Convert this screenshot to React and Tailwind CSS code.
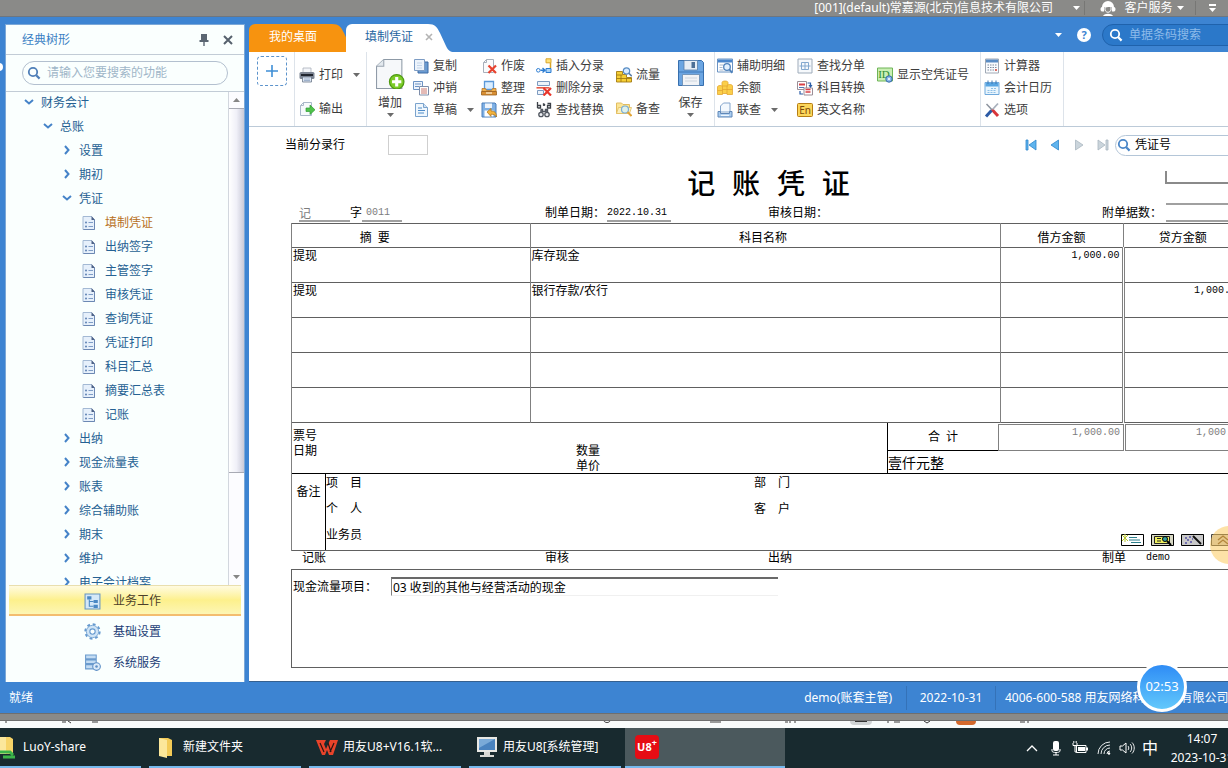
const Svg = ({ size = 16, box = 16, className = '', children }) => (
  <svg width={size} height={size} viewBox={`0 0 ${box} ${box}`} fill="none" className={`shrink-0 ${className}`} aria-hidden="true">
    {children}
  </svg>
)

const Caret = ({ className = 'text-[#6b6b6b]' }) => (
  <svg width="7" height="4" viewBox="0 0 7 4" className={`shrink-0 ${className}`} aria-hidden="true">
    <path d="M0 0h7L3.500 4z" fill="currentColor" />
  </svg>
)

const SearchIcon = ({ className, size = 14 }) => (
  <Svg size={size} box={14} className={className}>
    <circle cx="6" cy="6" r="4.2" stroke="currentColor" strokeWidth="1.8" />
    <path d="M9.2 9.2l3.4 3.4" stroke="currentColor" strokeWidth="2.2" />
  </Svg>
)

const DocIcon = () => (
  <Svg>
    <path d="M2 1.500h8.500l3 3v10H2z" fill="#e6f0fb" stroke="#a3b9d4" />
    <path d="M10.500 1v4h3.500z" fill="#4d6288" />
    <path d="M13.500 5v9.500H2.500" stroke="#6c88b3" />
    <circle cx="5" cy="7.500" r="1" fill="#5f82b3" />
    <circle cx="5" cy="11.500" r="1" fill="#5f82b3" />
    <path d="M7.500 7.500H12M7.500 11.500H12" stroke="#7f9dc6" />
  </Svg>
)

const icons = {
  print: (
    <Svg>
      <path d="M4 1h8v5H4z" fill="#f4f6fa" stroke="#a9b0ba" strokeWidth=".8" />
      <rect x="0.500" y="5" width="15" height="7" rx="1.500" fill="#7d8593" />
      <path d="M2 7h12v2H2z" fill="#20252e" />
      <path d="M3.500 10h9v5h-9z" fill="#dfe8f5" stroke="#6b7788" strokeWidth=".8" />
      <path d="M5 12h6M5 13.500h6" stroke="#8ea3c2" strokeWidth=".8" />
    </Svg>
  ),
  export: (
    <Svg>
      <path d="M4.500 1.500h8v13h-11v-10z" fill="#f7fafc" stroke="#a9b8c9" />
      <path d="M1.500 4.500h3v-3" stroke="#a9b8c9" />
      <path d="M7 7h4V4l5 4.800-5 4.700v-3H7z" fill="#4fc24a" stroke="#2f9c35" strokeWidth=".7" />
    </Svg>
  ),
  add: (
    <Svg size={31} box={30}>
      <path d="M8.500 1.500H26v28H1.500V8z" fill="#f6f8fa" stroke="#8d99a6" />
      <path d="M1.500 8h7V1.500" stroke="#9aa5b1" fill="#e3e9ee" />
      <circle cx="21" cy="23" r="7" fill="#7ccc28" stroke="#4f9a12" strokeWidth="1.200" />
      <path d="M21 18.500v9M16.500 23h9" stroke="#fff" strokeWidth="3" />
    </Svg>
  ),
  copy: (
    <Svg>
      <path d="M5 4h10v11H5z" fill="#6b9bd1" stroke="#3c6ba5" />
      <path d="M1.500 1.500h10v11h-10z" fill="#edf4fc" stroke="#7d9cc4" />
      <path d="M4 5h5M4 7.500h5M4 10h5" stroke="#c3d5ea" />
    </Svg>
  ),
  offset: (
    <Svg>
      <path d="M.5 1.500h9v8h-9z" fill="#eef4fc" stroke="#6d93c4" />
      <path d="M2 4h6M2 6.500h4" stroke="#6d93c4" />
      <path d="M6.500 6.500h9v8.500h-9z" fill="#fff" stroke="#7e8eaa" />
      <path d="M8 9h6M8 11h6M8 13h6" stroke="#c9776f" />
    </Svg>
  ),
  draft: (
    <Svg>
      <path d="M2.500 1.500h8l4 4v9h-12z" fill="#f0f7fd" stroke="#7ba3cd" />
      <path d="M10.500 1.500v4h4" fill="#cfe2f5" stroke="#7ba3cd" />
      <path d="M5 6h4M5 8.500h7M5 11h6" stroke="#4f8cc9" />
    </Svg>
  ),
  voided: (
    <Svg>
      <path d="M5.500 1.500h7v13h-10v-10z" fill="#fbfbfc" stroke="#a8b0bb" />
      <path d="M2.500 4.500h3v-3" stroke="#a8b0bb" />
      <path d="M7.500 7.500l7.500 7.500M15 7.500L7.500 15" stroke="#e8432f" strokeWidth="2.200" />
    </Svg>
  ),
  tidy: (
    <Svg>
      <path d="M3.500 1.500h9v8h-9z" fill="#dbeeff" stroke="#5b98d8" strokeWidth="1.300" />
      <path d="M1 8.500h3.500l1 2h5l1-2H15v3H1z" fill="#f2b24c" stroke="#b5762b" strokeWidth=".8" />
      <path d="M.5 11.500h15v3.500H.5z" fill="#d98f33" stroke="#9b611d" strokeWidth=".8" />
      <path d="M5 13h6" stroke="#fff3dc" strokeWidth="1.200" />
    </Svg>
  ),
  discard: (
    <Svg>
      <path d="M1 1h13l1 1v13H1z" fill="#7fb0e4" stroke="#4a7ebb" />
      <path d="M4 1.500h7v4.500H4z" fill="#eef4fb" />
      <path d="M3.500 8.500h9v6h-9z" fill="#fff" />
      <path d="M6 10l4-3.500V9c4 0 5.500 2 5.500 6-1.500-2.200-3-2.800-5.500-2.800v2.300z" fill="#f3b33c" stroke="#a96e19" strokeWidth=".7" />
    </Svg>
  ),
  insert: (
    <Svg>
      <path d="M10 .8h5v4h-5z" fill="#ffe27a" stroke="#d9a52b" />
      <path d="M10 10.500h5v4h-5z" fill="#a9d3f7" stroke="#2d7dd2" />
      <path d="M14.500 5v5" stroke="#d9a52b" strokeWidth="1.500" />
      <circle cx="2.300" cy="12.300" r="1.800" stroke="#2d7dd2" />
      <path d="M4.500 12.300H8M6.500 10l2.500 2.300-2.500 2.300" stroke="#2d7dd2" strokeWidth="1.400" />
    </Svg>
  ),
  remove: (
    <Svg>
      <path d="M1.500 1.500h12v4h-12zM1.500 10.500h6v4h-6z" fill="#edf3fa" stroke="#7d9ac0" />
      <path d="M.5 7.800h13" stroke="#e55a48" strokeWidth="1.600" />
      <path d="M7.500 8l7.500 7.500M15 8l-7.500 7.500" stroke="#e8362b" strokeWidth="2.200" />
    </Svg>
  ),
  replace: (
    <Svg>
      <path d="M1.500 0v6M1.500 3.500h3V6h-3M7 3.500l2-1.500M7 1.500l2 2M11.500 1.500h3V6h-3V3.500h3" stroke="#3c4148" strokeWidth="1.300" />
      <path d="M4.500 7.500h2v2h3v-2h2v2.500M5 8v3M11 8v3" stroke="#50565f" strokeWidth="1.400" />
      <circle cx="5" cy="12.500" r="2.200" fill="#eceef1" stroke="#50565f" strokeWidth="1.300" />
      <circle cx="11" cy="12.500" r="2.200" fill="#eceef1" stroke="#50565f" strokeWidth="1.300" />
    </Svg>
  ),
  flow: (
    <Svg>
      <path d="M.5 4.500h6v3h4v3h5v4.500H.5z" fill="#f6cf35" stroke="#a37c12" strokeWidth=".9" />
      <path d="M.5 8h6M.5 11.500h15M5 8v7M10.500 11v4" stroke="#a37c12" strokeWidth=".9" />
      <circle cx="10.500" cy="4" r="3.200" fill="#d7ebff" stroke="#5a8dc4" strokeWidth="1.200" />
      <path d="M12.800 6.300l3 3" stroke="#5a7ea8" strokeWidth="1.600" />
    </Svg>
  ),
  check: (
    <Svg>
      <path d="M.5 2h5l1.500 1.500h6.500v9H.5z" fill="#fbe596" stroke="#e2bd60" />
      <path d="M2.500 6.500h13l-2 6H.5z" fill="#fdf0bb" stroke="#e2bd60" strokeWidth=".8" />
      <circle cx="9" cy="8.500" r="3.500" fill="#dff1ea" stroke="#7aaed6" strokeWidth="1.200" />
      <path d="M11.500 11l4 4" stroke="#e2a436" strokeWidth="2" />
    </Svg>
  ),
  save: (
    <Svg size={28} box={28}>
      <path d="M1.500 1.500h23l2 2v23h-25z" fill="#6ba5e2" stroke="#376fae" />
      <path d="M7 1.500h13.500v9.500H7z" fill="#e6edf5" stroke="#587fa9" strokeWidth=".8" />
      <path d="M14.500 3h3.500v6h-3.500z" fill="#4d6f96" />
      <path d="M2 13h24" stroke="#3f79b8" />
      <path d="M5.500 15.500h17v11h-17z" fill="#f1f3f6" stroke="#6488ae" strokeWidth=".8" />
      <path d="M8 19h12M8 22h12" stroke="#cdd5de" />
    </Svg>
  ),
  detail: (
    <Svg>
      <path d="M.5 1h15v13H.5z" fill="#fff" stroke="#6b94c4" />
      <path d="M1 1.500h14v3H1z" fill="#4a86cb" />
      <path d="M2.500 7h4M2.500 9.500h3M2.500 12h4" stroke="#a9b9cd" />
      <circle cx="10" cy="9" r="3.300" fill="#e1f0fe" stroke="#4f82bb" strokeWidth="1.300" />
      <path d="M12.300 11.300l3 3.500" stroke="#4f82bb" strokeWidth="1.800" />
    </Svg>
  ),
  balance: (
    <Svg>
      <g fill="#fbcf4a" stroke="#e3a732" strokeWidth=".8">
        <path d="M5 2.500C5 .5 11 .5 11 2.500v11H5z" />
        <path d="M.5 7c0-2 5-2 5 0v7.500h-5zM10 6c0-2 5.500-2 5.500 0v8.500H10z" />
        <path d="M5 6h6M5 9.500h6M.5 10.500h5M10 9.500h5.500" />
      </g>
    </Svg>
  ),
  link: (
    <Svg>
      <path d="M6.500 1H13v9H3.500V4z" fill="#f4f9fe" stroke="#84a5cc" />
      <path d="M1 9.500h2.500v2h9v-2H15V15H1z" fill="#a9ccf0" stroke="#6088b8" />
      <path d="M4 13.300h8" stroke="#fff" />
    </Svg>
  ),
  findSplit: (
    <Svg>
      <path d="M1 1h14v14H1z" fill="#f6f9fc" stroke="#9eabba" />
      <path d="M4.500 4.500h7v7h-7zM8 4.500v7M2.500 8h11" stroke="#84a9cf" />
    </Svg>
  ),
  convert: (
    <Svg>
      <path d="M.5 1.500h9v8h-9z" fill="#fff" stroke="#9a8e97" />
      <path d="M2 3.500h6v2H2z" fill="#d93f45" />
      <path d="M2 7.500h5" stroke="#4c75b5" />
      <path d="M7 8h8.500v7H7z" fill="#fff" stroke="#9a8e97" />
      <path d="M8.500 9.500h5M8.500 12h5" stroke="#d93f45" strokeWidth="1.300" />
      <path d="M10.500 3h3v3.500M12 5l1.500 2L15 5" stroke="#2c5ea7" strokeWidth="1.200" />
      <path d="M3 11v3h3" stroke="#2c5ea7" strokeWidth="1.200" />
    </Svg>
  ),
  english: (
    <Svg>
      <rect x=".5" y="1.500" width="15" height="13" rx="1" fill="#fcd65a" stroke="#b67d13" />
      <text x="8" y="12" textAnchor="middle" fontSize="10" fontFamily="Noto Sans" fill="#7b4a07">En</text>
    </Svg>
  ),
  showId: (
    <Svg>
      <path d="M.5 1h15v13H.5z" fill="#c9efb4" stroke="#6fb457" />
      <text x="7" y="11" textAnchor="middle" fontSize="11" fontFamily="Liberation Serif" fill="#2f8c34">ID</text>
      <circle cx="12" cy="12" r="3.200" fill="#8ab8ea" stroke="#3469a8" />
      <circle cx="12" cy="12" r="1" fill="#fff" />
    </Svg>
  ),
  calculator: (
    <Svg>
      <path d="M1.500 1h13v14h-13z" fill="#fafbfd" stroke="#a0a9b5" />
      <path d="M2 1.500h12v3H2z" fill="#5a8cc4" />
      <path d="M3.500 7h9M3.500 9.500h9M3.500 12h9" stroke="#7f8da0" strokeWidth="1.200" strokeDasharray="1.500 1" />
      <path d="M11 12h2" stroke="#e04b3b" strokeWidth="1.500" />
    </Svg>
  ),
  calendar: (
    <Svg>
      <path d="M1 2.500h14v12H1z" fill="#e9f5fd" stroke="#6fa9dc" />
      <path d="M1.500 3h13v3.500h-13z" fill="#57a5e2" />
      <path d="M4 .5V4M8 .5V4M12 .5V4" stroke="#3c79b5" />
      <path d="M7 8.500h6M3.500 10.500h9M3.500 12.500h9" stroke="#8dbfe6" strokeDasharray="2 1" />
    </Svg>
  ),
  options: (
    <Svg>
      <path d="M2.500 2l9 9.500" stroke="#8c939e" strokeWidth="1.500" />
      <path d="M8 7.500l6 6.500" stroke="#d8353a" strokeWidth="3" />
      <path d="M14 1.500L8.500 7.500" stroke="#a8b0bc" strokeWidth="1.800" />
      <path d="M7.500 8.500L2 14.500" stroke="#2c5aa5" strokeWidth="3" />
    </Svg>
  ),
}

const treeItems = [
  { name: '财务会计', level: 0, type: 'open' },
  { name: '总账', level: 1, type: 'open' },
  { name: '设置', level: 2, type: 'closed' },
  { name: '期初', level: 2, type: 'closed' },
  { name: '凭证', level: 2, type: 'open' },
  { name: '填制凭证', level: 3, type: 'doc', active: true },
  { name: '出纳签字', level: 3, type: 'doc' },
  { name: '主管签字', level: 3, type: 'doc' },
  { name: '审核凭证', level: 3, type: 'doc' },
  { name: '查询凭证', level: 3, type: 'doc' },
  { name: '凭证打印', level: 3, type: 'doc' },
  { name: '科目汇总', level: 3, type: 'doc' },
  { name: '摘要汇总表', level: 3, type: 'doc' },
  { name: '记账', level: 3, type: 'doc' },
  { name: '出纳', level: 2, type: 'closed' },
  { name: '现金流量表', level: 2, type: 'closed' },
  { name: '账表', level: 2, type: 'closed' },
  { name: '综合辅助账', level: 2, type: 'closed' },
  { name: '期末', level: 2, type: 'closed' },
  { name: '维护', level: 2, type: 'closed' },
  { name: '电子会计档案', level: 2, type: 'closed' },
]

const indents = ['pl-[18px]', 'pl-[37px]', 'pl-[56px]', 'pl-[75px]']

const toolGroups = [
  { className: 'w-[72px] border-l pl-1 pt-[6px]', rows: 2, items: [['print', '打印', true], ['export', '输出']] },
  { className: 'w-[47px] border-l', big: ['add', '增加'] },
  { className: 'w-[68px] pt-[3px]', items: [['copy', '复制'], ['offset', '冲销'], ['draft', '草稿', true]] },
  { className: 'w-[55px] pt-[3px]', items: [['voided', '作废'], ['tidy', '整理'], ['discard', '放弃']] },
  { className: 'w-[80px] pt-[3px]', items: [['insert', '插入分录'], ['remove', '删除分录'], ['replace', '查找替换']] },
  { className: 'w-[51px] pt-[6px]', rows: 2, items: [['flow', '流量'], ['check', '备查']] },
  { className: 'w-[47px]', big: ['save', '保存'] },
  { className: 'w-[83px] border-l pl-[2px] pt-[3px]', items: [['detail', '辅助明细'], ['balance', '余额'], ['link', '联查', true]] },
  { className: 'w-[80px] pt-[3px]', items: [['findSplit', '查找分单'], ['convert', '科目转换'], ['english', '英文名称']] },
  { className: 'w-[103px] pt-[6px]', rows: 2, items: [['showId', '显示空凭证号']] },
  { className: 'w-[84px] border-x pl-[3px] pt-[3px]', items: [['calculator', '计算器'], ['calendar', '会计日历'], ['options', '选项']] },
]

const entries = [
  { id: 1, summary: '提现', subject: '库存现金', debit: '1,000.00', credit: '' },
  { id: 2, summary: '提现', subject: '银行存款/农行', debit: '', credit: '1,000.00' },
  { id: 3, summary: '', subject: '', debit: '', credit: '' },
  { id: 4, summary: '', subject: '', debit: '', credit: '' },
  { id: 5, summary: '', subject: '', debit: '', credit: '' },
]

const TitleBar = () => (
  <header className="flex h-[17px] shrink-0 items-center justify-end border-b border-[#6d7680] bg-[#8a8a88] text-xs leading-[14px] text-white">
    <span className="whitespace-nowrap">[001](default)常嘉源(北京)信息技术有限公司</span>
    <button aria-label="切换账套" className="flex h-[14px] w-8 items-center justify-end border-r border-[#777775] pr-1">
      <Caret className="text-white" />
    </button>
    <button className="flex h-[14px] w-[111px] items-center justify-center gap-2 border-r border-[#777775] pl-1">
      <Svg>
        <path d="M2 7a6 6 0 0112 0c2 .5 2 4 0 4.500h-2V7H4v4.500H2C0 11 0 7.500 2 7z" fill="#fff" />
        <path d="M5 7c2 0 4-.5 5-2l1 2v3c-1 3-5 3-6 0z" stroke="#fff" />
        <path d="M3 16c1.500-3 8.500-3 10 0z" fill="#fff" />
      </Svg>
      <span>客户服务</span>
      <Caret className="-ml-1 text-white" />
    </button>
    <button aria-label="更多" className="flex h-[14px] w-8 flex-col items-center justify-center gap-[2px]">
      <span className="h-[2px] w-[7px] bg-white" />
      <Caret className="text-white" />
    </button>
  </header>
)

const TreeIcon = ({ type }) => {
  if (type === 'doc') return <DocIcon />
  return (
    <Svg size={10} box={10} className="mb-[2px] text-[#4583c8]">
      {type === 'open' ? (
        <path d="M1 3l4 3.500L9 3" stroke="currentColor" strokeWidth="2" />
      ) : (
        <path d="M3 1l3.500 4L3 9" stroke="currentColor" strokeWidth="2" />
      )}
    </Svg>
  )
}

const Sidebar = () => (
  <aside className="flex w-[240px] shrink-0 flex-col border border-b-0 border-[#7ba8d8] bg-[#fafffe]">
    <div className="flex h-[30px] shrink-0 items-center border-b border-[#c2ccd6] pl-4 pr-1">
      <h2 className="flex-1 text-xs text-[#3a7fc4]">经典树形</h2>
      <button aria-label="固定" className="flex w-6 justify-center">
        <Svg size={12} box={12}>
          <path d="M3 0h6v6h1.500v2h-9V6H3zM5.300 7.500h1.400V12H5.300z" fill="#5b6672" />
        </Svg>
      </button>
      <button aria-label="关闭" className="flex w-6 justify-center">
        <Svg size={10} box={10}>
          <path d="M1 1l8 8M9 1L1 9" stroke="#56616d" strokeWidth="2" />
        </Svg>
      </button>
    </div>
    <div className="flex h-[37px] shrink-0 items-center border-b border-[#c2ccd6] px-4">
      <label className="flex h-6 flex-1 items-center gap-1.5 rounded-full border border-[#b3c0cf] pl-1">
        <SearchIcon className="text-[#4f7fb8]" />
        <input
          aria-label="搜索功能"
          placeholder="请输入您要搜索的功能"
          className="w-full min-w-0 bg-transparent text-xs outline-none placeholder:text-[#9fb6c8]"
        />
      </label>
    </div>
    <div className="flex min-h-0 flex-1">
      <ul className="min-w-0 flex-1 overflow-hidden text-xs text-[#256193]">
        {treeItems.map((item) => (
          <li key={item.name} className={`flex h-6 items-center pb-[2px] ${indents[item.level]}`}>
            <a href="#" className={`flex items-center ${item.type === 'doc' ? 'gap-2' : 'gap-[7px]'} ${item.active ? 'text-[#b8701c]' : ''}`}>
              <TreeIcon type={item.type} />
              <span>{item.name}</span>
            </a>
          </li>
        ))}
      </ul>
      <div className="flex w-4 shrink-0 flex-col border-l border-[#d2d7de] bg-[#fcfcff]">
        <button aria-label="向上滚动" className="flex h-4 items-center justify-center">
          <Caret className="rotate-180 text-[#868686]" />
        </button>
        <div className="flex-1 pb-[96px]">
          <div className="h-full border-y border-[#a8aab4] bg-linear-to-r from-white via-[#f0f0f8] to-[#c9cad8]" />
        </div>
        <button aria-label="向下滚动" className="flex h-4 items-center justify-center">
          <Caret className="text-[#868686]" />
        </button>
      </div>
    </div>
    <nav className="shrink-0 px-[3px] pb-1 text-xs text-[#1f3f78]">
      <button className="flex h-[31px] w-full items-center gap-3 border-b-2 border-t border-b-[#f3bd6f] border-t-[#e9dfae] bg-linear-to-b from-[#fffbe0] via-[#fdf08c] to-[#fdf6b4] pl-[75px] pt-[2px] text-[#4c3f2a]">
        <Svg size={17}>
          <path d="M1 1h14v14H1z" fill="#d5e8f8" stroke="#6796c4" />
          <path d="M3 3h4v3H3zM9 6.500h4v3H9zM9 11h4v3H9z" fill="#4a88c4" />
          <path d="M5 6v6.500h4M5 8h4" stroke="#4a88c4" />
        </Svg>
        <span>业务工作</span>
      </button>
      <button className="flex h-[31px] w-full items-center gap-3 pl-[75px]">
        <Svg size={17}>
          <circle cx="8" cy="8" r="6.800" stroke="#6599cf" strokeWidth="1.800" strokeDasharray="2.700 2.640" />
          <circle cx="8" cy="8" r="5.800" fill="#cfe4f6" stroke="#6f9fd0" strokeWidth=".8" />
          <circle cx="8" cy="8" r="2.500" fill="#fafffe" stroke="#6599cf" />
        </Svg>
        <span>基础设置</span>
      </button>
      <button className="flex h-[31px] w-full items-center gap-3 pl-[75px]">
        <Svg size={17}>
          <path d="M1.500 1h10v3.500h-10zM1.500 5.500h10V9h-10zM1.500 10h10v4h-10z" fill="#c3dcf3" stroke="#6b9bcd" />
          <circle cx="11.800" cy="11.800" r="3.600" fill="#dcebf9" stroke="#5e8fc6" />
          <circle cx="11.800" cy="11.800" r="1.200" fill="#5e8fc6" />
        </Svg>
        <span>系统服务</span>
      </button>
    </nav>
  </aside>
)

const TabSlope = ({ className }) => (
  <svg width="26" height="28" viewBox="0 0 26 28" className={`shrink-0 ${className}`} aria-hidden="true">
    <path d="M0 0C7 0 9 3 12 9l6 13c2 4 4 6 8 6H0z" fill="currentColor" />
  </svg>
)

const TabBar = () => (
  <div className="flex h-7 shrink-0 items-stretch overflow-hidden text-xs">
    <div className="flex">
      <button className="w-[83px] rounded-tl-md bg-[#f7930f] pb-[2px] pl-[5px] text-white">我的桌面</button>
      <TabSlope className="text-[#f7930f]" />
    </div>
    <div className="relative -ml-3 flex">
      <div className="flex w-[82px] items-center rounded-tl-md bg-white pb-[2px] pl-[19px]">
        <button className="shrink-0 text-[#1e659f]">填制凭证</button>
      </div>
      <TabSlope className="text-white" />
      <button aria-label="关闭标签" className="absolute left-[79px] top-[9px]">
        <Svg size={8} box={8}>
          <path d="M1 1l6 6M7 1L1 7" stroke="#b4b4b4" strokeWidth="1.600" />
        </Svg>
      </button>
    </div>
    <div className="-mr-[18px] flex flex-1 items-center justify-end pb-[6px]">
      <button aria-label="标签列表" className="flex w-6 justify-center">
        <Caret className="text-white" />
      </button>
      <button aria-label="帮助" className="flex w-7 justify-center">
        <span className="flex size-[14px] items-center justify-center rounded-full bg-white text-[11px] font-bold text-[#3d84d2]">?</span>
      </button>
      <label className="ml-1 flex h-[22px] w-[144px] items-center gap-1.5 rounded-l-full border border-[#1f62ac] bg-[#2b78c9] pl-1.5 text-white">
        <SearchIcon />
        <input
          aria-label="单据条码搜索"
          placeholder="单据条码搜索"
          className="w-full min-w-0 bg-transparent text-xs outline-none placeholder:text-[#8dbbea]"
        />
      </label>
    </div>
  </div>
)

const Toolbar = () => (
  <div className="flex h-[75px] shrink-0 overflow-hidden border-b border-[#bccad8] bg-white pl-2 text-xs text-[#3c3c3c]">
    <button aria-label="添加快捷" className="mr-[7px] mt-1 flex size-[30px] shrink-0 items-center justify-center rounded-sm border border-dashed border-[#5c93cc]">
      <Svg size={12} box={12}>
        <path d="M6 0v12M0 6h12" stroke="#3f8fd6" strokeWidth="1.600" />
      </Svg>
    </button>
    {toolGroups.map((group, i) => (
      <div key={i} className={`shrink-0 border-[#dde3ea] ${group.className}`}>
        {group.big ? (
          <button className="flex w-full flex-col items-center pt-[5px]">
            <span className="flex h-8 items-center">{icons[group.big[0]]}</span>
            <span className="mt-1 leading-5">{group.big[1]}</span>
            <Caret />
          </button>
        ) : (
          group.items.map(([icon, name, hasMenu]) => (
            <button key={name} className={`flex w-full items-center gap-1 whitespace-nowrap ${group.rows === 2 ? 'h-[34px]' : 'h-[22px]'}`}>
              {icons[icon]}
              <span>{name}</span>
              {hasMenu && <Caret className="ml-1.5 text-[#6b6b6b]" />}
            </button>
          ))
        )}
      </div>
    ))}
  </div>
)

const NavBar = () => (
  <div className="flex h-9 items-center pl-9">
    <label htmlFor="current-line">当前分录行</label>
    <input id="current-line" className="ml-[43px] h-5 w-10 border border-[#cfcfcf] outline-none" />
    <div className="ml-auto flex items-center">
      <button aria-label="首张" className="flex w-6 justify-center">
        <Svg size={12} box={12}>
          <path d="M1 1h2v10H1zM11 1v10L4 6z" fill="#5fb4ee" stroke="#2f86cc" strokeWidth=".8" />
        </Svg>
      </button>
      <button aria-label="上一张" className="flex w-6 justify-center">
        <Svg size={12} box={12}>
          <path d="M9.500 1v10L2 6z" fill="#5fb4ee" stroke="#2f86cc" strokeWidth=".8" />
        </Svg>
      </button>
      <button aria-label="下一张" className="flex w-6 justify-center">
        <Svg size={12} box={12}>
          <path d="M2.500 1v10L10 6z" fill="#cbd5dc" stroke="#a9b6c0" strokeWidth=".8" />
        </Svg>
      </button>
      <button aria-label="末张" className="flex w-6 justify-center">
        <Svg size={12} box={12}>
          <path d="M9 1h2v10H9zM1 1v10l7-5z" fill="#cbd5dc" stroke="#a9b6c0" strokeWidth=".8" />
        </Svg>
      </button>
      <label className="flex h-[21px] w-[131px] items-center gap-1 rounded-l-full border border-[#b4c6d8] pl-px">
        <SearchIcon className="text-[#4a86c8]" />
        <input aria-label="凭证号" defaultValue="凭证号" className="w-full min-w-0 bg-transparent outline-none" />
      </label>
    </div>
  </div>
)

const Totals = () => (
  <div className="flex h-[51px] border-b border-black">
    <div className="grid flex-1 grid-cols-[283px_1fr] pl-px pt-[5px] leading-[15px]">
      <div>
        <p>票号</p>
        <p>日期</p>
      </div>
      <div className="pt-[15px]">
        <p>数量</p>
        <p>单价</p>
      </div>
    </div>
    <div className="w-[359px] border-l border-black">
      <div className="flex h-7">
        <div className="flex w-[110px] items-center justify-center whitespace-pre border-b border-black">合  计</div>
        <div className="mt-px w-[126px] border border-[#808080] pr-[3px] text-right font-['Liberation_Mono',monospace] text-[10px] leading-4 text-[#7d7d7d]">1,000.00</div>
        <div className="ml-px mt-px flex-1 border border-[#808080] pr-px text-right font-['Liberation_Mono',monospace] text-[10px] leading-4 text-[#7d7d7d]">1,000.00</div>
      </div>
      <p className="text-sm leading-6">壹仟元整</p>
    </div>
  </div>
)

const Memo = () => (
  <div className="relative flex h-[77px] border-b border-[#606060]">
    <div className="w-[34px] border-r border-black pt-2 text-center leading-5">备注</div>
    <div className="grid flex-1 grid-cols-[428px_1fr] content-start gap-y-2 leading-[18px]">
      <span>项　目</span>
      <span>部　门</span>
      <span>个　人</span>
      <span>客　户</span>
      <span>业务员</span>
    </div>
    <div className="flex items-end gap-[7px] pb-1 pr-3">
      <button aria-label="新增备注">
        <svg width="23" height="12" viewBox="0 0 23 12" aria-hidden="true">
          <path d="M.5.5h22v11H.5z" fill="#fff" stroke="#000" />
          <path d="M8 3.500h8M8 6h11M10 8.500h10" stroke="#2c7f8c" />
          <path d="M1 1l6 6M7 1L1 7M4 0v8" stroke="#b9c72e" />
        </svg>
      </button>
      <button aria-label="查看备注">
        <svg width="23" height="12" viewBox="0 0 23 12" aria-hidden="true">
          <path d="M.5.5h22v11H.5z" fill="#d8d8c4" stroke="#000" />
          <path d="M3.500 2.500h15v7h-15z" fill="#eef05e" stroke="#222" />
          <path d="M6 4.500h4M6 7h4" stroke="#222" />
          <circle cx="14" cy="5" r="2.500" fill="#35a0a0" stroke="#000" />
          <path d="M16 7l4 4" stroke="#000" strokeWidth="2" />
        </svg>
      </button>
      <button aria-label="编辑备注">
        <svg width="23" height="12" viewBox="0 0 23 12" aria-hidden="true">
          <path d="M.5.5h22v11H.5z" fill="#c9c9c9" stroke="#000" />
          <path d="M4 4h2M8 3h2M6 6h2M4 9h2M9 8h2M11 5h1" stroke="#5552a5" strokeWidth="1.500" />
          <path d="M12 2l8 8" stroke="#111" strokeWidth="2" />
        </svg>
      </button>
      <button aria-label="收起">
        <svg width="23" height="12" viewBox="0 0 23 12" aria-hidden="true">
          <path d="M.5.5h22v11H.5z" fill="#d0cbc2" stroke="#444" />
          <path d="M7 6l5-4 5 4M7 10l5-4 5 4" stroke="#6a4526" fill="none" strokeWidth="1.300" />
        </svg>
      </button>
    </div>
    <span className="pointer-events-none absolute -bottom-[14px] -right-[2px] size-[38px] rounded-full bg-[#fbc650]/50" />
  </div>
)

const Voucher = () => (
  <main className="min-h-0 flex-1 overflow-hidden border-b border-[#35608f] bg-white text-xs text-black">
    <div className="-mr-[18px]">
      <NavBar />
      <div className="pl-[42px]">
        <div className="grid h-[42px] grid-cols-[1fr_auto_1fr] items-end">
          <h1 className="col-start-2 font-['Liberation_Mono','Noto_Sans_CJK_SC',serif] text-[28px] font-medium leading-9">记 账 凭 证</h1>
          <input aria-label="凭证附注" className="mt-2 h-[13px] w-[81px] self-start justify-self-end border-b-2 border-l-2 border-[#8a8a8a] outline-none" />
        </div>
        <div className="grid h-[18px] grid-cols-[254px_223px_1fr_144px]">
          <div className="flex items-start pl-2">
            <input aria-label="凭证类别" defaultValue="记" className="h-[17px] w-[51px] border-b-2 border-[#a0a0a0] text-[#7d7d7d] outline-none" />
            <label htmlFor="voucher-no">字</label>
            <input id="voucher-no" defaultValue="0011" className="h-[17px] w-10 border-b-2 border-[#a0a0a0] pl-1 font-['Liberation_Mono',monospace] text-[10px] text-[#7d7d7d] outline-none" />
          </div>
          <div className="flex items-start">
            <label htmlFor="make-date">制单日期：</label>
            <input id="make-date" defaultValue="2022.10.31" className="ml-[2px] h-[17px] w-16 border-b-2 border-[#a0a0a0] font-['Liberation_Mono',monospace] text-[10px] outline-none" />
          </div>
          <span>审核日期：</span>
          <div className="flex items-start gap-1">
            <label htmlFor="attachments" className="shrink-0">附单据数：</label>
            <input id="attachments" className="-mt-[2px] h-[19px] w-full min-w-0 border-y-2 border-[#a0a0a0] outline-none" />
          </div>
        </div>
        <div className="border-l border-[#808080]">
          <table className="w-full table-fixed border-collapse">
            <colgroup>
              <col className="w-[238px]" />
              <col />
              <col className="w-[123px]" />
              <col className="w-[123px]" />
            </colgroup>
            <thead>
              <tr className="h-6 border-y border-[#606060]">
                <th className="whitespace-pre border-r border-[#808080] p-0 pt-1 pr-18 font-normal leading-[19px]">摘  要</th>
                <th className="border-r border-[#808080] p-0 pr-1 pt-1 font-normal leading-[19px]">科目名称</th>
                <th className="border-r border-[#808080] p-0 pt-1 font-normal leading-[19px]">借方金额</th>
                <th className="p-0 pr-1 pt-1 font-normal leading-[19px]">贷方金额</th>
              </tr>
            </thead>
            <tbody>
              {entries.map((entry) => (
                <tr key={entry.id} className="h-[35px] border-b border-[#606060] align-top">
                  <td className="border-r border-[#808080] p-0 pl-px">{entry.summary}</td>
                  <td className="border-r border-[#808080] p-0 pl-px">{entry.subject}</td>
                  <td className="p-0 pr-[2px] text-right font-['Liberation_Mono',monospace] text-[10px] leading-4">{entry.debit}</td>
                  <td className="border-l-3 border-double border-l-[#808080] p-0 pr-1 text-right font-['Liberation_Mono',monospace] text-[10px] leading-4">{entry.credit}</td>
                </tr>
              ))}
            </tbody>
          </table>
          <Totals />
          <Memo />
        </div>
        <div className="grid h-[18px] grid-cols-[254px_223px_1fr_144px] leading-[14px]">
          <span className="pl-[11px]">记账</span>
          <span>审核</span>
          <span>出纳</span>
          <span className="flex gap-5">
            制单
            <span className="font-['Liberation_Mono',monospace] text-[10px]">demo</span>
          </span>
        </div>
        <div className="flex h-[99px] items-start border border-r-0 border-[#606060] pt-[7px]">
          <label htmlFor="cash-flow" className="w-[99px] pl-px leading-5">现金流量项目：</label>
          <input
            id="cash-flow"
            defaultValue="03 收到的其他与经营活动的现金"
            className="h-[19px] w-[387px] border-b border-l border-t-2 border-b-[#f0f0f0] border-l-[#808080] border-t-[#696969] pl-px outline-none"
          />
        </div>
      </div>
    </div>
  </main>
)

const StatusBar = () => (
  <footer className="relative flex h-[31px] shrink-0 items-center bg-[#3d84d2] pl-[9px] text-xs text-white">
    <span className="flex-1">就绪</span>
    <div className="flex h-6 shrink-0 items-center">
      <span className="border-r border-[#3472b8] pr-[14px] leading-6">demo(账套主管)</span>
      <span className="w-[89px] border-r border-[#3472b8] text-center leading-6">2022-10-31</span>
      <span className="w-[232px] overflow-hidden whitespace-nowrap pl-[9px] leading-6">4006-600-588 用友网络科技股份有限公司</span>
    </div>
    <div className="absolute -top-[20px] right-[41px] z-10 flex size-[50px] items-center justify-center rounded-full border-3 border-white bg-linear-to-b from-[#2f8cf5] to-[#63c8fb] text-[13px]">
      02:53
    </div>
  </footer>
)

const tasks = [
  {
    name: 'LuoY-share',
    icon: (
      <Svg size={24} box={24}>
        <path d="M5 2h10l3 2v15H5z" fill="#f7d468" />
        <path d="M5 2h6v17H5z" fill="#fbe79c" />
        <path d="M1 17h14l3 3M8 22h12" stroke="#3cb54a" strokeWidth="3" />
      </Svg>
    ),
  },
  {
    name: '新建文件夹',
    icon: (
      <Svg size={24} box={24}>
        <path d="M4 3h9l4 2v16H4z" fill="#f3cb57" />
        <path d="M4 3l8 2v18l-8-2z" fill="#fce79a" />
      </Svg>
    ),
  },
  {
    name: '用友U8+V16.1软...',
    icon: (
      <Svg size={24} box={24}>
        <path d="M1 5h10l-2 4 2 5 4-9h8l-5 15h-4l-2-5-2 5H7z" fill="#e8432a" />
        <path d="M5 8l4 9M13 8l3 9M19 8l-4 9" stroke="#2a1512" strokeWidth="1.200" />
      </Svg>
    ),
  },
  {
    name: '用友U8[系统管理]',
    icon: (
      <Svg size={24} box={24}>
        <path d="M2 2h20v15H2z" fill="#e8e8e4" />
        <path d="M4 4h16v11H4z" fill="#4a83bf" />
        <path d="M4 4h16L4 13z" fill="#7aaad8" />
        <path d="M9 17h6v3h4v2H5v-2h4z" fill="#d9d9d5" />
      </Svg>
    ),
  },
]

const Taskbar = () => (
  <div className="flex h-10 shrink-0 overflow-hidden bg-[#182a2f] text-xs text-white">
    <div className="-ml-[15px] flex">
      {tasks.map((task) => (
        <div key={task.name} className="w-40 shrink-0 px-1">
          <button className="flex h-full w-full items-center gap-1 whitespace-nowrap border-b-2 border-[#76b9ed] pl-1.5">
            {task.icon}
            <span>{task.name}</span>
          </button>
        </div>
      ))}
      <button aria-label="用友U8+" className="flex w-40 shrink-0 items-center border-b-2 border-[#76b9ed] bg-[#4b595d] pl-[10px]">
        <span className="flex size-6 items-center justify-center rounded-sm bg-[#e60c14] text-[11px] font-bold">
          U8<sup className="text-[9px]">+</sup>
        </span>
      </button>
    </div>
    <div className="ml-auto flex shrink-0 items-center">
      <button aria-label="显示隐藏的图标" className="flex w-6 justify-center">
        <Svg size={12} box={12}>
          <path d="M1 9l5-5 5 5" stroke="#fff" strokeWidth="1.300" />
        </Svg>
      </button>
      <span className="flex w-6 justify-center">
        <Svg>
          <rect x="5" y="1" width="6" height="10" rx="2" fill="#fff" />
          <path d="M4 9v2c0 2 8 2 8 0V9M8 12v3M5 15h6" stroke="#fff" />
        </Svg>
      </span>
      <span className="flex w-6 justify-center">
        <Svg>
          <path d="M4.500 5.500H14v7H4.500z" stroke="#fff" />
          <path d="M6 7h7v4H6zM14 7.500h2v3h-2z" fill="#fff" />
          <path d="M1 3v2.500h4V3M3 5v7h2M1.800 1v2M4.200 1v2" stroke="#fff" />
        </Svg>
      </span>
      <span className="flex w-6 justify-center">
        <Svg>
          <path d="M2 14A12 12 0 0114 2M5 14a9 9 0 019-9M8 14a6 6 0 016-6M11 14a3 3 0 013-3" stroke="#e8eced" />
          <circle cx="13" cy="13.500" r="1.200" fill="#fff" />
        </Svg>
      </span>
      <span className="flex w-[22px] justify-center">
        <Svg>
          <path d="M1 6h2.500L7 3v10l-3.500-3H1z" stroke="#fff" />
          <path d="M9 6c1 1 1 3 0 4M11 4c2.200 2 2.200 6 0 8M13 2.500c3 3 3 8 0 11" stroke="#fff" strokeWidth=".9" />
        </Svg>
      </span>
      <span className="w-6 text-center text-base">中</span>
      <div className="-mr-[14px] w-20 text-center leading-[19px]">
        <p>14:07</p>
        <p>2023-10-31</p>
      </div>
    </div>
  </div>
)

// Bottom edge of the window that lies behind this one
const BackWindow = () => (
  <div className="relative flex h-[7px] shrink-0 justify-end gap-21 bg-[#f8fbfb] pr-[252px]" aria-hidden="true">
    <span className="flex h-1 w-[22px] justify-center rounded-b-full bg-[#cfd3d4]">
      <span className="h-px w-3 bg-[#333]" />
    </span>
    <span className="h-1 w-5 rounded-b-sm bg-[#d4692c]" />
    <svg width="1040" height="3" viewBox="0 0 1040 3" className="absolute left-0 top-0">
      <path
        d="M6 0v2M62 1h4M68 0l3 2M92 1h6M604 0c1 2 5 2 6 0M710 1h11M785 1h3M790 0v2M795 0v2M888 0v2M894 1h6M924 0l3 2 3-2M1020 1h5M1028 0v2"
        stroke="#3a3a3a"
        fill="none"
      />
    </svg>
  </div>
)

const App = () => {
  return (
    <div className="flex h-screen flex-col overflow-hidden bg-[#3d84d2] font-['Noto_Sans','Noto_Sans_CJK_SC',sans-serif]">
      <TitleBar />
      <div className="relative flex min-h-0 flex-1 gap-1 pl-[5px] pt-[7px]">
        <span className="absolute -left-[5px] top-[46px] size-2 rounded-full bg-white" />
        <Sidebar />
        <div className="flex min-w-0 flex-1 flex-col">
          <TabBar />
          <Toolbar />
          <Voucher />
        </div>
      </div>
      <StatusBar />
      <div className="h-2 shrink-0 border-y border-[#6f6f6f] bg-[#8a8a88]" />
      <BackWindow />
      <Taskbar />
    </div>
  )
}

export default App
